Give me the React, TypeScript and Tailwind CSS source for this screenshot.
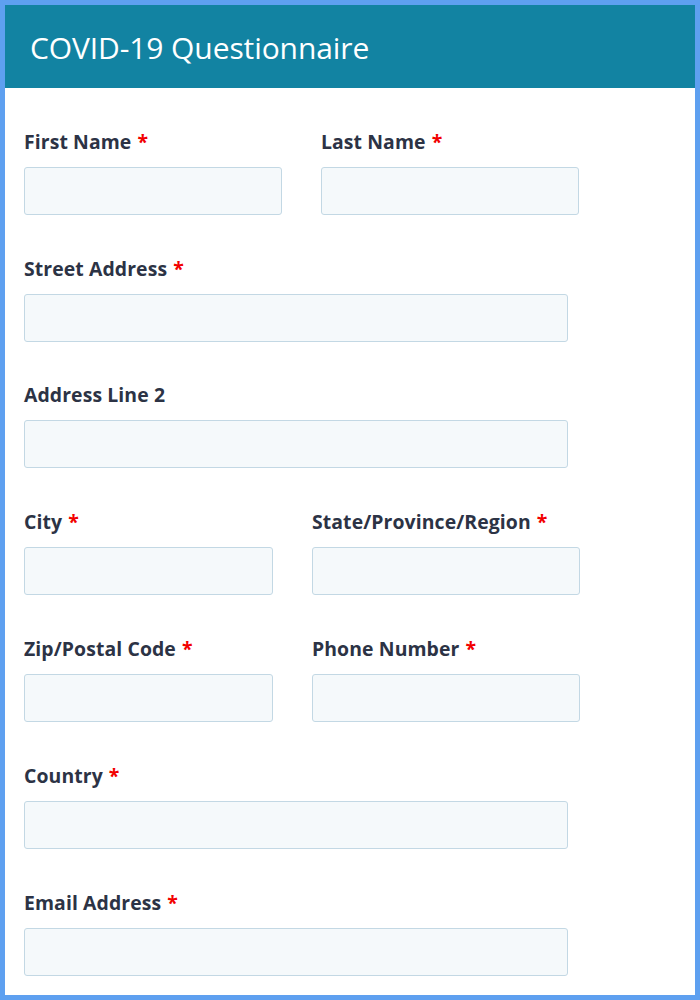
import React from "react";

const Field = ({ label, required = true, width }: { label: string; required?: boolean; width: string }) => {
  return (
    <div className="flex flex-col">
      <label className="text-[19.4px] leading-6 font-bold text-[#2c3345] tracking-[0.1px]">
        {label}
        {required && <span className="text-[#f20000] ml-1.5">*</span>}
      </label>
      <input
        className={`mt-[13px] h-12 ${width} bg-[#f5f9fb] border border-[#c3d8e4] rounded-[3px] outline-none`}
      />
    </div>
  );
};

const App = () => {
  return (
    <div className="w-[700px] h-[1000px] bg-[#5ea0f0] p-[5px] font-['Open_Sans',sans-serif]">
      <div className="h-full bg-white flex flex-col">
        {/* Header */}
        <div className="h-[83px] bg-[#1283a2] flex items-center px-[25px]">
          <h1 className="text-[30px] text-white font-normal tracking-[-0.1px] pt-[2px]">COVID-19 Questionnaire</h1>
        </div>

        {/* Form */}
        <div className="flex flex-col pt-[42px] pl-[19px]">
          <div className="flex gap-[39px]">
            <Field label="First Name" width="w-[258px]" />
            <Field label="Last Name" width="w-[258px]" />
          </div>
          <div className="mt-[42px]">
            <Field label="Street Address" width="w-[544px]" />
          </div>
          <div className="mt-[41px]">
            <Field label="Address Line 2" required={false} width="w-[544px]" />
          </div>
          <div className="flex gap-[39px] mt-[42px]">
            <Field label="City" width="w-[249px]" />
            <Field label="State/Province/Region" width="w-[268px]" />
          </div>
          <div className="flex gap-[39px] mt-[42px]">
            <Field label="Zip/Postal Code" width="w-[249px]" />
            <Field label="Phone Number" width="w-[268px]" />
          </div>
          <div className="mt-[42px]">
            <Field label="Country" width="w-[544px]" />
          </div>
          <div className="mt-[42px]">
            <Field label="Email Address" width="w-[544px]" />
          </div>
        </div>
      </div>
    </div>
  );
};

export default App;
